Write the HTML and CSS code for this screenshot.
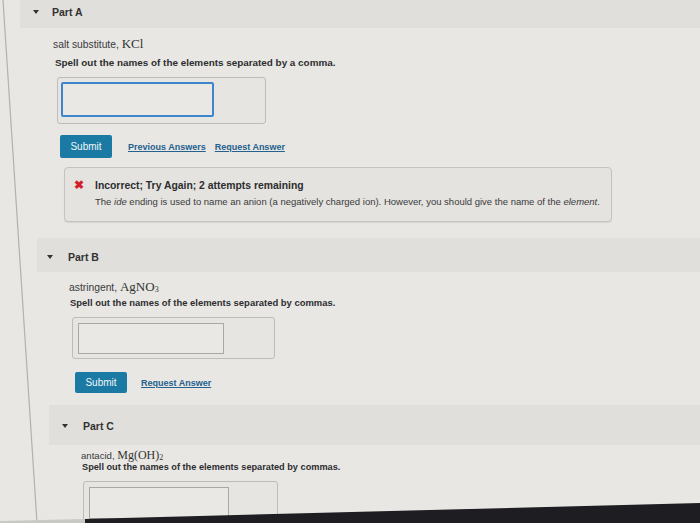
FILE: index.html
```html
<!DOCTYPE html>
<html>
<head>
<meta charset="utf-8">
<link rel="stylesheet" href="styles.css">
</head>
<body>
<div class="page">
  <svg class="edge" width="700" height="523" viewBox="0 0 700 523">
    <line x1="3" y1="0" x2="37" y2="523" stroke="#b3b1ad" stroke-width="1.2"/>
    <polygon points="0,521 85,519 85,523 0,523" fill="#c9c8c4"/>
    <polygon points="85,519 700,503 700,523 85,523" fill="#1d1d22"/>
  </svg>

  <section class="part part-a">
    <div class="part-head"><span class="caret"></span><span class="part-title">Part A</span></div>
    <div class="part-body">
      <p class="prompt">salt substitute, <span class="chem">KCl</span></p>
      <p class="instr">Spell out the names of the elements separated by a comma.</p>
      <div class="answer-wrap"><div class="answer-input focused"></div></div>
      <div class="actions">
        <span class="submit">Submit</span>
        <a class="link">Previous Answers</a>
        <a class="link">Request Answer</a>
      </div>
      <div class="feedback">
        <div class="fb-title"><span class="x-mark">&#10006;</span>Incorrect; Try Again; 2 attempts remaining</div>
        <div class="fb-text">The <i>ide</i> ending is used to name an anion (a negatively charged ion). However, you should give the name of the <i>element</i>.</div>
      </div>
    </div>
  </section>

  <section class="part part-b">
    <div class="part-head"><span class="caret"></span><span class="part-title">Part B</span></div>
    <div class="part-body">
      <p class="prompt">astringent, <span class="chem">AgNO<sub>3</sub></span></p>
      <p class="instr">Spell out the names of the elements separated by commas.</p>
      <div class="answer-wrap"><div class="answer-input"></div></div>
      <div class="actions">
        <span class="submit">Submit</span>
        <a class="link">Request Answer</a>
      </div>
    </div>
  </section>

  <section class="part part-c">
    <div class="part-head"><span class="caret"></span><span class="part-title">Part C</span></div>
    <div class="part-body">
      <p class="prompt">antacid, <span class="chem">Mg(OH)<sub>2</sub></span></p>
      <p class="instr">Spell out the names of the elements separated by commas.</p>
      <div class="answer-wrap"><div class="answer-input"></div></div>
    </div>
  </section>
</div>
</body>
</html>
```

FILE: styles.css
```css
* { box-sizing: border-box; }
html, body { margin: 0; padding: 0; }
body {
  width: 700px;
  height: 523px;
  overflow: hidden;
  background: #e8e7e3;
  font-family: "Liberation Sans", Arial, sans-serif;
  color: #2e2e30;
}
.page { position: relative; width: 700px; height: 523px; }
.edge { position: absolute; left: 0; top: 0; pointer-events: none; z-index: 2; }

.part-head {
  display: flex;
  align-items: center;
  background: #e0dfdb;
}
.caret {
  width: 0; height: 0;
  border-left: 3.5px solid transparent;
  border-right: 3.5px solid transparent;
  border-top: 4px solid #333;
}
.part-title { font-size: 10.5px; font-weight: bold; color: #333; }

p { margin: 0; }
.prompt { font-size: 10.3px; line-height: 14px; height: 14px; color: #3a3a3c; }
.chem { font-family: "Liberation Serif", "Times New Roman", serif; font-size: 13px; line-height: 14px; color: #333; }
.chem sub { font-size: 8px; vertical-align: -1px; line-height: 0; }
.instr { font-size: 9.9px; font-weight: bold; line-height: 14px; height: 14px; color: #2d2d30; }

.answer-wrap {
  border: 1px solid #bdbcb8;
  border-radius: 3px;
  background: #e6e5e1;
}
.answer-input {
  background: #e9e8e5;
  border: 1px solid #a9a8a4;
}
.answer-input.focused { border: 2px solid #3d86cc; border-radius: 2px; }

.actions { display: flex; align-items: center; }
.submit {
  display: flex; align-items: center; justify-content: center;
  background: #1a7aa3;
  color: #f2f6f8;
  font-size: 10px;
  border-radius: 2px;
}
.link {
  color: #24618f;
  font-size: 9px;
  font-weight: bold;
  text-decoration: underline;
}

.feedback {
  border: 1px solid #c4c3bf;
  border-radius: 4px;
  background: #e4e3df;
  box-shadow: 0 1px 1px rgba(0,0,0,0.08);
}
.fb-title { display: flex; align-items: center; font-size: 10.4px; font-weight: bold; color: #2d2d30; }
.x-mark { color: #d11f2a; font-size: 12px; width: 21px; margin-left: 9px; }
.fb-text { font-size: 9.5px; color: #3a3a3c; padding-left: 30px; margin-top: 4px; }

/* Part A */
.part-a { margin-left: 20px; }
.part-a .part-head { height: 28px; padding-left: 13px; padding-bottom: 4px; }
.part-a .caret { margin-right: 13px; }
.part-a .part-body { padding-left: 33px; }
.part-a .prompt { margin-top: 9px; }
.part-a .instr { margin-top: 5px; padding-left: 2px; }
.part-a .answer-wrap { margin-top: 7px; margin-left: 4px; width: 209px; height: 47px; padding: 4px 51px 6px 3px; }
.part-a .answer-input { height: 35px; }
.part-a .actions { margin-top: 11px; margin-left: 7px; }
.part-a .submit { width: 52px; height: 23px; margin-right: 16px; }
.part-a .link + .link { margin-left: 9px; }
.part-a .feedback { margin-top: 9px; margin-left: 11px; width: 548px; height: 55px; padding-top: 10px; }

/* Part B */
.part-b { margin-left: 37px; margin-top: 16px; }
.part-b .part-head { height: 34px; padding-left: 10px; padding-top: 4px; }
.part-b .caret { margin-right: 15px; }
.part-b .part-body { padding-left: 32px; }
.part-b .prompt { margin-top: 8px; }
.part-b .instr { margin-top: 2px; padding-left: 1px; font-size: 9.45px; }
.part-b .answer-wrap { margin-top: 7px; margin-left: 3px; width: 203px; height: 42px; padding: 5px 50px 4px 5px; }
.part-b .answer-input { height: 31px; }
.part-b .actions { margin-top: 13px; margin-left: 6px; }
.part-b .submit { width: 52px; height: 21px; margin-right: 14px; }

/* Part C */
.part-c { margin-left: 49px; margin-top: 12px; }
.part-c .part-head { height: 40px; padding-left: 13px; padding-top: 2px; }
.part-c .caret { margin-right: 15px; }
.part-c .part-body { padding-left: 32px; }
.part-c .prompt { margin-top: 4px; line-height: 12px; height: 12px; font-size: 9.6px; }
.part-c .prompt .chem { font-size: 12px; line-height: 12px; }
.part-c .instr { margin-top: 1px; line-height: 11px; height: 11px; padding-left: 1px; font-size: 9.2px; }
.part-c .answer-wrap { margin-top: 8px; margin-left: 2px; width: 195px; height: 42px; padding: 5px 48px 0 5px; }
.part-c .answer-input { height: 32px; }
```
